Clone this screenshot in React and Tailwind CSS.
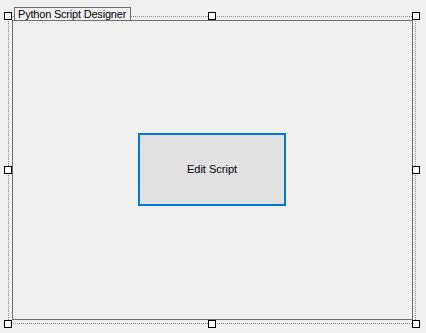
const handlePositions = [
  'left-[4px] top-[12px]',
  'left-[208px] top-[12px]',
  'left-[412px] top-[12px]',
  'left-[4px] top-[166px]',
  'left-[412px] top-[166px]',
  'left-[4px] top-[320px]',
  'left-[208px] top-[320px]',
  'left-[412px] top-[320px]',
]

function Handle({ pos }) {
  return <div className={`absolute h-[8px] w-[8px] border border-black bg-white ${pos}`} />
}

export default function App() {
  return (
    <div
      className="relative h-[333px] w-[426px] overflow-hidden bg-[#f0f0f0] pl-[8px] pt-[16px] text-[11px] text-black"
      style={{ fontFamily: '"Liberation Sans", Arial, sans-serif' }}
    >
      {/* selection frame */}
      <div className="h-[308px] w-[408px] border border-dotted border-[#8a8a8a] pb-[3px] pl-[3px] pr-[2px] pt-[3px]">
        {/* designer panel */}
        <div className="flex h-full w-full items-start border border-[#6e6e6e] pl-[125px] pt-[112px]">
          <button className="flex h-[73px] w-[148px] items-center justify-center border-2 border-[#0078d7] bg-[#e1e1e1] leading-none">
            Edit Script
          </button>
        </div>
      </div>

      <div className="absolute left-[14px] top-[7px] flex h-[14px] w-[117px] items-center whitespace-nowrap border border-[#6e6e6e] bg-[#f0f0f0] pl-[3px] leading-none tracking-[-0.2px]">
        Python Script Designer
      </div>

      {handlePositions.map((p) => (
        <Handle key={p} pos={p} />
      ))}
    </div>
  )
}
